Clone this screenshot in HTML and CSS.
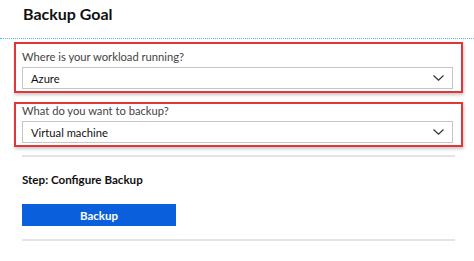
FILE: index.html
```html
<!DOCTYPE html>
<html lang="en">
<head>
<meta charset="utf-8">
<title>Backup Goal</title>
<link rel="stylesheet" href="styles.css">
</head>
<body>
<header class="blade-header">
  <h1 class="blade-title">Backup Goal</h1>
</header>
<main class="blade-content">
  <section class="goal-box goal-box--first">
    <label class="field-label">Where is your workload running?</label>
    <div class="select-box">
      <span class="select-value">Azure</span>
      <svg class="chevron" width="11" height="6" viewBox="0 0 11 6"><path d="M0.5 0.5 L5.5 5.2 L10.5 0.5" fill="none" stroke="#333" stroke-width="1.2"/></svg>
    </div>
  </section>
  <section class="goal-box goal-box--second">
    <label class="field-label">What do you want to backup?</label>
    <div class="select-box">
      <span class="select-value">Virtual machine</span>
      <svg class="chevron" width="11" height="6" viewBox="0 0 11 6"><path d="M0.5 0.5 L5.5 5.2 L10.5 0.5" fill="none" stroke="#333" stroke-width="1.2"/></svg>
    </div>
  </section>
  <div class="step-section">
    <h2 class="step-title">Step: Configure Backup</h2>
    <button class="primary-button">Backup</button>
  </div>
</main>
</body>
</html>
```

FILE: styles.css
```css
html, body {
  margin: 0;
  padding: 0;
  background: #ffffff;
}
body {
  font-family: "Lato", "Open Sans", sans-serif;
  color: #1e1e1e;
  width: 474px;
  height: 261px;
  overflow: hidden;
}
.blade-header {
  height: 39px;
  border-bottom: 1px dotted #5db4e0;
  padding-left: 23px;
  box-sizing: border-box;
}
.blade-title {
  margin: 0;
  padding-top: 3px;
  font-size: 16px;
  line-height: 22px;
  font-weight: 700;
  color: #111;
}
.blade-content {
  padding: 3px 11px 0 14px;
}
.goal-box {
  border: 2px solid #e0353a;
  box-shadow: 1px 2px 3px rgba(0, 0, 0, 0.22);
  padding: 0 8px 2px 6px;
}
.goal-box--first {
  padding-top: 6px;
}
.goal-box--second {
  margin-top: 9px;
  padding-top: 0;
}
.field-label {
  display: block;
  font-size: 11.2px;
  line-height: 13px;
  color: #444;
  margin-bottom: 4px;
}
.select-box {
  height: 22px;
  box-sizing: border-box;
  border: 1px solid #c6c6c6;
  display: flex;
  align-items: center;
  justify-content: space-between;
  padding: 0 8px 0 8px;
}
.select-value {
  font-size: 11.2px;
  color: #111;
}
.chevron {
  display: block;
}
.step-section {
  margin: 8px 8px 0 8px;
  border-top: 2px solid #e4e4e4;
  border-bottom: 2px solid #e4e4e4;
  padding: 15px 0 13px 0;
}
.step-title {
  margin: 0;
  font-size: 11.6px;
  line-height: 16px;
  font-weight: 700;
  color: #111;
}
.primary-button {
  display: block;
  margin-top: 16px;
  width: 154px;
  height: 22px;
  border: none;
  background: #0a5fdc;
  color: #fff;
  font-family: "Lato", "Open Sans", sans-serif;
  font-size: 11.5px;
  font-weight: 700;
  padding: 0;
}
```
